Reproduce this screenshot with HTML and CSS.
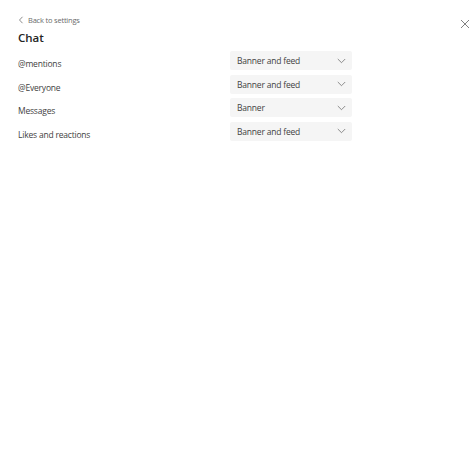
FILE: index.html
```html
<!DOCTYPE html>
<html>
<head>
<meta charset="utf-8">
<link rel="stylesheet" href="styles.css">
</head>
<body>
<div class="page">
  <div class="top">
    <a class="back">
      <svg class="back-icon" width="6" height="8" viewBox="0 0 6 8"><path d="M4.5 0.8 L1.5 4 L4.5 7.2" fill="none" stroke="#707070" stroke-width="0.8"/></svg>
      <span>Back to settings</span>
    </a>
    <button class="close" aria-label="Close">
      <svg width="10" height="10" viewBox="0 0 10 10"><path d="M1 1 L9 9 M9 1 L1 9" fill="none" stroke="#616161" stroke-width="0.8"/></svg>
    </button>
  </div>
  <h1 class="title">Chat</h1>
  <div class="rows">
    <div class="row"><span class="label">@mentions</span><div class="select"><span>Banner and feed</span><svg class="chev" width="9" height="6" viewBox="0 0 9 6"><path d="M0.8 1 L4.5 4.7 L8.2 1" fill="none" stroke="#707070" stroke-width="0.8"/></svg></div></div>
    <div class="row"><span class="label">@Everyone</span><div class="select"><span>Banner and feed</span><svg class="chev" width="9" height="6" viewBox="0 0 9 6"><path d="M0.8 1 L4.5 4.7 L8.2 1" fill="none" stroke="#707070" stroke-width="0.8"/></svg></div></div>
    <div class="row"><span class="label">Messages</span><div class="select"><span>Banner</span><svg class="chev" width="9" height="6" viewBox="0 0 9 6"><path d="M0.8 1 L4.5 4.7 L8.2 1" fill="none" stroke="#707070" stroke-width="0.8"/></svg></div></div>
    <div class="row"><span class="label">Likes and reactions</span><div class="select"><span>Banner and feed</span><svg class="chev" width="9" height="6" viewBox="0 0 9 6"><path d="M0.8 1 L4.5 4.7 L8.2 1" fill="none" stroke="#707070" stroke-width="0.8"/></svg></div></div>
  </div>
</div>
</body>
</html>
```
FILE: styles.css
```css
html, body {
  margin: 0;
  padding: 0;
  background: #ffffff;
}
body {
  font-family: "Open Sans", "Noto Sans", sans-serif;
  color: #242424;
}
.page {
  padding: 14px 0 0 18px;
  width: 456px;
}
.top {
  display: flex;
  align-items: center;
  justify-content: space-between;
  height: 12px;
}
.back {
  display: flex;
  align-items: center;
  gap: 4px;
  font-size: 7.5px;
  letter-spacing: -0.2px;
  color: #6b6b6b;
}
.back-icon {
  display: block;
}
.close {
  border: 0;
  background: none;
  padding: 0;
  margin: 8px 4px 0 0;
  display: flex;
}
.title {
  margin: 4px 0 0 0;
  font-size: 11.5px;
  font-weight: 600;
  line-height: 16px;
  color: #242424;
}
.rows {
  margin-top: 5px;
  display: flex;
  flex-direction: column;
  gap: 4.5px;
}
.row {
  display: flex;
  align-items: center;
  height: 19px;
}
.label {
  width: 212px;
  font-size: 8.5px;
  letter-spacing: -0.2px;
  color: #424242;
  padding-top: 6px;
}
.select {
  width: 122px;
  height: 19px;
  background: #f5f5f5;
  border-radius: 2px;
  display: flex;
  align-items: center;
  justify-content: space-between;
  padding: 0 6px 0 7px;
  box-sizing: border-box;
  font-size: 8.5px;
  letter-spacing: -0.2px;
  color: #424242;
}
.chev {
  display: block;
}
```
